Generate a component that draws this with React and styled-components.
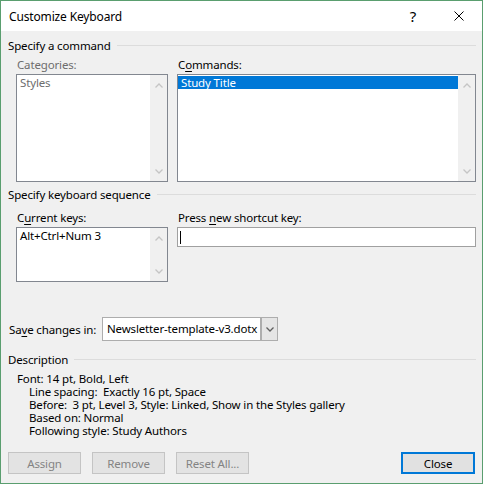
import React from 'react'
import styled, { createGlobalStyle } from 'styled-components'

const GlobalStyle = createGlobalStyle`
  html, body {
    margin: 0;
    padding: 0;
    background: #fff;
  }
  body {
    font-family: "Noto Sans", "DejaVu Sans", sans-serif;
    font-size: 11.5px;
    letter-spacing: -0.15px;
    color: #000;
  }
  * { box-sizing: border-box; }
`

const Window = styled.div`
  width: 483px;
  height: 484px;
  border: 1px solid #5a9e6f;
  display: flex;
  flex-direction: column;
  background: #f0f0f0;
  overflow: hidden;
`

const TitleBar = styled.div`
  height: 30px;
  flex: none;
  background: #fff;
  display: flex;
  align-items: center;
  padding-left: 8px;
`

const Title = styled.div`
  flex: 1;
  font-size: 12px;
`

const TitleButton = styled.div`
  width: ${p => p.$w}px;
  height: 30px;
  display: flex;
  align-items: center;
  justify-content: center;
  font-size: 15px;
`

const Body = styled.div`
  flex: 1;
  display: flex;
  flex-direction: column;
  padding: 0 6px 0 7px;
`

const GroupHeader = styled.div`
  display: flex;
  align-items: center;
  gap: 6px;
  height: 15px;
  line-height: 15px;
  white-space: nowrap;
  margin-top: ${p => p.$top}px;
  &::after {
    content: "";
    flex: 1;
    height: 1px;
    background: #dcdcdc;
  }
`

const Pair = styled.div`
  display: grid;
  grid-template-columns: 152px 1fr;
  column-gap: 9px;
  padding-left: 8px;
  margin-top: ${p => p.$top}px;
`

const Field = styled.div`
  display: flex;
  flex-direction: column;
  align-items: stretch;
`

const Label = styled.div`
  height: 15px;
  line-height: 15px;
  margin-bottom: 2px;
  padding-left: 1px;
  white-space: nowrap;
  color: ${p => (p.$disabled ? '#6d6d6d' : '#000')};
  u { text-decoration-thickness: 1px; text-underline-offset: 2px; }
`

const ListBox = styled.div`
  height: ${p => p.$h}px;
  border: 1px solid #828790;
  background: #fff;
  display: flex;
`

const Items = styled.div`
  flex: 1;
  padding-top: 1px;
`

const Item = styled.div`
  height: 13px;
  line-height: 13px;
  padding-left: 3px;
  background: ${p => (p.$selected ? '#0078d7' : 'transparent')};
  color: ${p => (p.$selected ? '#fff' : p.$disabled ? '#6d6d6d' : '#000')};
  white-space: nowrap;
`

const ScrollTrack = styled.div`
  width: 17px;
  background: #f0f0f0;
  display: flex;
  flex-direction: column;
  justify-content: space-between;
  align-items: center;
  padding: 8px 0 7px;
`

const TextInput = styled.div`
  height: 20px;
  border: 1px solid #a0a0a0;
  background: #fff;
  display: flex;
  align-items: center;
  padding-left: 2px;
`

const Caret = styled.div`
  width: 1px;
  height: 13px;
  background: #000;
`

const SaveRow = styled.div`
  display: grid;
  grid-template-columns: 93px 176px;
  align-items: center;
  padding-left: 1px;
  margin-top: 35px;
  white-space: nowrap;
  u { text-decoration-thickness: 1px; text-underline-offset: 2px; }
`

const Combo = styled.div`
  height: 24px;
  border: 1px solid #adadad;
  background: #fff;
  display: flex;
  align-items: stretch;
`

const ComboText = styled.div`
  flex: 1;
  line-height: 22px;
  padding-left: 4px;
  white-space: nowrap;
  overflow: hidden;
`

const ComboButton = styled.div`
  width: 17px;
  background: #e5e5e5;
  border-left: 2px solid #adadad;
  display: flex;
  align-items: center;
  justify-content: center;
`

const Description = styled.div`
  margin-top: 5px;
  padding-left: 9px;
`

const DescLine = styled.div`
  height: 13px;
  line-height: 13px;
  padding-left: ${p => (p.$indent ? 12 : 0)}px;
  white-space: nowrap;
`

const ButtonRow = styled.div`
  display: flex;
  gap: 11px;
  margin-top: 15px;
  padding-right: 1px;
`

const Button = styled.div`
  width: ${p => (p.$default ? 74 : 73)}px;
  height: 22px;
  display: flex;
  align-items: center;
  justify-content: center;
  background: ${p => (p.$disabled ? '#e3e3e3' : '#e1e1e1')};
  border: ${p => (p.$default ? '2px solid #0078d7' : '1px solid #c4c4c4')};
  color: ${p => (p.$disabled ? '#838383' : '#000')};
  margin-left: ${p => (p.$push ? 'auto' : '0')};
`

function Chevron({ up, color = '#c5c5c5' }) {
  return (
    <svg width="8" height="5" viewBox="0 0 8 5">
      <polyline
        points={up ? '0.5,4.5 4,1 7.5,4.5' : '0.5,0.5 4,4 7.5,0.5'}
        fill="none"
        stroke={color}
        strokeWidth="1.3"
      />
    </svg>
  )
}

function Scroll() {
  return (
    <ScrollTrack>
      <Chevron up />
      <Chevron />
    </ScrollTrack>
  )
}

export default function App() {
  return (
    <>
      <GlobalStyle />
      <Window>
        <TitleBar>
          <Title>Customize Keyboard</Title>
          <TitleButton $w={46}>?</TitleButton>
          <TitleButton $w={46}>
            <svg width="10" height="10" viewBox="0 0 10 10">
              <path d="M0.5 0.5 L9.5 9.5 M9.5 0.5 L0.5 9.5" stroke="#000" strokeWidth="1" />
            </svg>
          </TitleButton>
        </TitleBar>
        <Body>
          <GroupHeader $top={7}>Specify a command</GroupHeader>
          <Pair $top={4}>
            <Field>
              <Label $disabled>Categories:</Label>
              <ListBox $h={108}>
                <Items>
                  <Item $disabled>Styles</Item>
                </Items>
                <Scroll />
              </ListBox>
            </Field>
            <Field>
              <Label>C<u>o</u>mmands:</Label>
              <ListBox $h={108}>
                <Items>
                  <Item $selected>Study Title</Item>
                </Items>
                <Scroll />
              </ListBox>
            </Field>
          </Pair>

          <GroupHeader $top={5}>Specify keyboard sequence</GroupHeader>
          <Pair $top={8}>
            <Field>
              <Label>C<u>u</u>rrent keys:</Label>
              <ListBox $h={55}>
                <Items>
                  <Item>Alt+Ctrl+Num 3</Item>
                </Items>
                <Scroll />
              </ListBox>
            </Field>
            <Field>
              <Label>Press <u>n</u>ew shortcut key:</Label>
              <TextInput>
                <Caret />
              </TextInput>
            </Field>
          </Pair>

          <SaveRow>
            <span>Sa<u>v</u>e changes in:</span>
            <Combo>
              <ComboText>Newsletter-template-v3.dotx</ComboText>
              <ComboButton>
                <Chevron color="#606060" />
              </ComboButton>
            </Combo>
          </SaveRow>

          <GroupHeader $top={11}>Description</GroupHeader>
          <Description>
            <DescLine>Font: 14 pt, Bold, Left</DescLine>
            <DescLine $indent>Line spacing:&nbsp; Exactly 16 pt, Space</DescLine>
            <DescLine $indent>Before:&nbsp; 3 pt, Level 3, Style: Linked, Show in the Styles gallery</DescLine>
            <DescLine $indent>Based on: Normal</DescLine>
            <DescLine $indent>Following style: Study Authors</DescLine>
          </Description>

          <ButtonRow>
            <Button $disabled>Assign</Button>
            <Button $disabled>Remove</Button>
            <Button $disabled>Reset All...</Button>
            <Button $default $push>Close</Button>
          </ButtonRow>
        </Body>
      </Window>
    </>
  )
}
